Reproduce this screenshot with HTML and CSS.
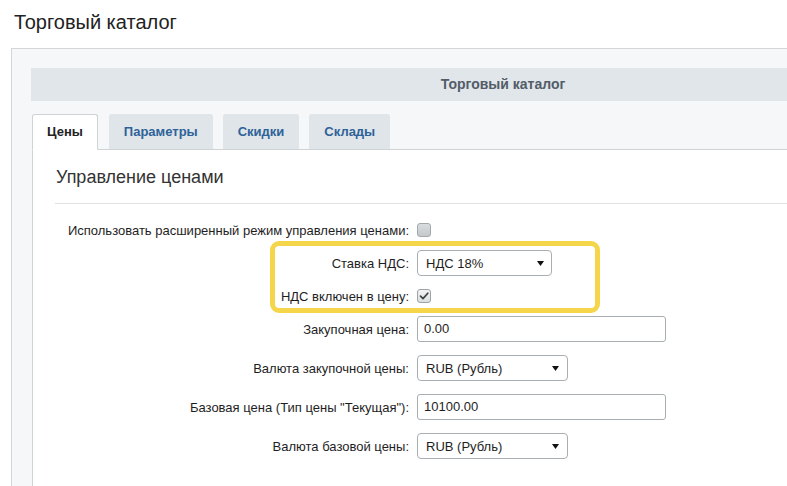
FILE: index.html
```html
<!DOCTYPE html>
<html lang="ru">
<head>
<meta charset="utf-8">
<title>Торговый каталог</title>
<link rel="stylesheet" href="styles.css">
</head>
<body>
<h1 class="page-title">Торговый каталог</h1>
<div class="panel">
  <div class="panel-head">Торговый каталог</div>
  <div class="tabs">
    <div class="tab active">Цены</div>
    <div class="tab">Параметры</div>
    <div class="tab">Скидки</div>
    <div class="tab">Склады</div>
  </div>
  <div class="tab-body">
    <h2 class="section-title">Управление ценами</h2>
    <div class="form">
      <div class="row first">
        <span class="lbl">Использовать расширенный режим управления ценами:</span>
        <span class="cb"></span>
      </div>
      <div class="row close">
        <span class="lbl">Ставка НДС:</span>
        <div class="select"><span>НДС 18%</span><svg class="arrow" width="7" height="5" viewBox="0 0 7 5"><polygon points="0,0 7,0 3.5,5" fill="#111"/></svg></div>
      </div>
      <div class="row close">
        <span class="lbl">НДС включен в цену:</span>
        <span class="cb checked"><svg width="12" height="12" viewBox="0 0 12 12"><path d="M2.5 6.2 L5 8.6 L9.8 3.2" fill="none" stroke="#3d4245" stroke-width="1.7" stroke-linecap="round" stroke-linejoin="round"/></svg></span>
      </div>
      <div class="row close">
        <span class="lbl">Закупочная цена:</span>
        <div class="input">0.00</div>
      </div>
      <div class="row">
        <span class="lbl">Валюта закупочной цены:</span>
        <div class="select wide"><span>RUB (Рубль)</span><svg class="arrow" width="7" height="5" viewBox="0 0 7 5"><polygon points="0,0 7,0 3.5,5" fill="#111"/></svg></div>
      </div>
      <div class="row">
        <span class="lbl">Базовая цена (Тип цены "Текущая"):</span>
        <div class="input">10100.00</div>
      </div>
      <div class="row">
        <span class="lbl">Валюта базовой цены:</span>
        <div class="select wide"><span>RUB (Рубль)</span><svg class="arrow" width="7" height="5" viewBox="0 0 7 5"><polygon points="0,0 7,0 3.5,5" fill="#111"/></svg></div>
      </div>
      <div class="highlight"></div>
    </div>
  </div>
</div>
</body>
</html>
```
FILE: styles.css
```css
html, body {
  margin: 0;
  padding: 0;
}
body {
  font-family: "Liberation Sans", Arial, sans-serif;
  background: #fff;
  color: #222;
  width: 787px;
  height: 486px;
  overflow: hidden;
  display: flex;
  flex-direction: column;
}
.page-title {
  margin: 0;
  padding: 11px 0 0 14px;
  font-size: 20px;
  font-weight: normal;
  line-height: 23px;
  color: #222;
}
.panel {
  flex: 1;
  display: flex;
  flex-direction: column;
  margin: 14px 0 0 11px;
  border-top: 1px solid #d3d7d9;
  border-left: 1px solid #d3d7d9;
  background: #f5f7f8;
  padding: 19px 0 0 19px;
  min-height: 0;
}
.panel-head {
  height: 33px;
  line-height: 33px;
  background: #e0e6e9;
  font-size: 14px;
  font-weight: bold;
  color: #535c69;
  text-align: center;
  padding-left: 188px;
}
.tabs {
  display: flex;
  align-items: flex-start;
  gap: 10px;
  margin: 13px 0 0 1px;
}
.tab {
  height: 35px;
  box-sizing: border-box;
  padding: 0 15px;
  line-height: 35px;
  font-size: 13px;
  font-weight: bold;
  color: #2e6298;
  background: #dfe5e8;
  border-radius: 3px 3px 0 0;
}
.tab.active {
  position: relative;
  z-index: 1;
  height: 36px;
  margin-bottom: -1px;
  margin-right: 1px;
  padding: 0 14px;
  line-height: 34px;
  background: #fff;
  color: #222;
  border: 1px solid #ced3d5;
  border-bottom-color: #fff;
}
.tab-body {
  flex: 1;
  margin-left: 1px;
  background: #fff;
  border-top: 1px solid #ced3d5;
  border-left: 1px solid #ced3d5;
  padding: 17px 0 0 22px;
  min-height: 0;
}
.section-title {
  margin: 0;
  padding: 0 0 15px 1px;
  font-size: 18px;
  font-weight: normal;
  line-height: 21px;
  color: #333;
}
.form {
  position: relative;
  border-top: 1px solid #dfe2e4;
  padding-top: 13px;
}
.row {
  display: flex;
  align-items: center;
  height: 26px;
  margin-top: 13px;
}
.row.first {
  margin-top: 0;
}
.row.close {
  margin-top: 7px;
}
.lbl {
  width: 354px;
  margin-right: 8px;
  text-align: right;
  font-size: 13px;
  color: #1e1e1e;
  white-space: nowrap;
}
.cb {
  width: 14px;
  height: 14px;
  box-sizing: border-box;
  border: 1px solid #a3a8ab;
  border-radius: 3px;
  background: linear-gradient(#dadddf, #c4c8cb);
  display: flex;
  align-items: center;
  justify-content: center;
}
.cb.checked {
  background: linear-gradient(#f1f2f3, #dcdfe1);
  border-color: #9ea3a6;
}
.select {
  width: 135px;
  height: 26px;
  box-sizing: border-box;
  border: 1px solid #a9aeb2;
  border-radius: 4px;
  background: #fff;
  display: flex;
  align-items: center;
  justify-content: space-between;
  padding: 0 7px 0 8px;
  font-size: 13px;
  color: #1e1e1e;
}
.select.wide {
  width: 151px;
  padding-right: 8px;
}
.input {
  width: 249px;
  height: 26px;
  box-sizing: border-box;
  border: 1px solid #a9aeb2;
  border-radius: 3px;
  background: #fff;
  padding-left: 6px;
  line-height: 24px;
  font-size: 13px;
  color: #1e1e1e;
}
.highlight {
  position: absolute;
  left: 215px;
  top: 37px;
  width: 330px;
  height: 72px;
  box-sizing: border-box;
  border: 5px solid #f5d54a;
  border-radius: 9px;
  pointer-events: none;
}
```
